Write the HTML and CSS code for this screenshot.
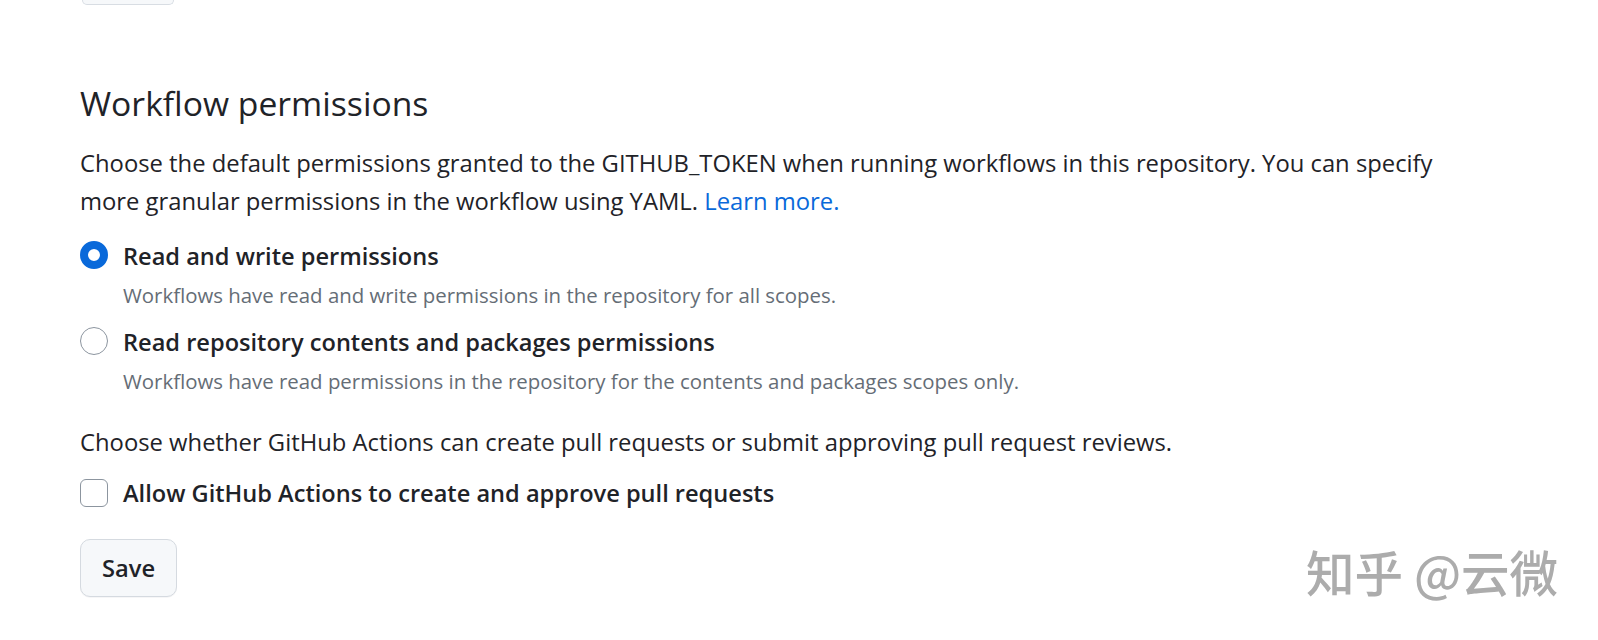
FILE: index.html
```html
<!DOCTYPE html>
<html lang="en">
<head>
<meta charset="utf-8">
<title>Workflow permissions</title>
<link rel="stylesheet" href="styles.css">
</head>
<body>
<main class="page">
  <div class="prev-button"></div>
  <section class="settings-section">
    <h2 class="section-title">Workflow permissions</h2>
    <p class="section-desc">Choose the default permissions granted to the GITHUB_TOKEN when running workflows in this repository. You can specify more granular permissions in the workflow using YAML. <a class="link" href="#">Learn more.</a></p>
    <div class="option-list">
      <label class="option">
        <input class="radio" type="radio" name="perm" checked>
        <span class="option-body">
          <span class="option-title">Read and write permissions</span>
          <span class="option-note">Workflows have read and write permissions in the repository for all scopes.</span>
        </span>
      </label>
      <label class="option">
        <input class="radio" type="radio" name="perm">
        <span class="option-body">
          <span class="option-title">Read repository contents and packages permissions</span>
          <span class="option-note">Workflows have read permissions in the repository for the contents and packages scopes only.</span>
        </span>
      </label>
    </div>
    <p class="section-desc section-desc-second">Choose whether GitHub Actions can create pull requests or submit approving pull request reviews.</p>
    <label class="check-option">
      <input class="checkbox" type="checkbox">
      <span class="option-title">Allow GitHub Actions to create and approve pull requests</span>
    </label>
    <button class="btn" type="button">Save</button>
  </section>
  <div class="watermark">知乎 @云微</div>
</main>
</body>
</html>
```

FILE: styles.css
```css
* { box-sizing: border-box; }

body {
  margin: 0;
  background: #ffffff;
  font-family: "Open Sans", "Noto Sans", sans-serif;
  color: #1f2328;
}

.page {
  position: relative;
  height: 640px;
  overflow: hidden;
  padding-left: 80px;
}

.prev-button {
  width: 92px;
  height: 5px;
  margin-left: 2px;
  background: #f6f8fa;
  border: 1.5px solid #d8dde3;
  border-top: 0;
  border-radius: 0 0 10px 10px;
}

.section-title {
  margin: 76px 0 0;
  font-size: 33.7px;
  line-height: 44px;
  font-weight: 400;
  color: #1f2328;
}

.section-desc {
  margin: 19px 0 0;
  max-width: 1385px;
  font-size: 23.8px;
  line-height: 38px;
}

.section-desc-second {
  margin-top: 27px;
}

.link {
  color: #0969da;
  text-decoration: none;
}

.option-list {
  display: flex;
  flex-direction: column;
  gap: 15px;
  margin-top: 19px;
}

.option {
  display: flex;
  align-items: flex-start;
  gap: 15px;
}

.option-body {
  display: flex;
  flex-direction: column;
}

.radio {
  appearance: none;
  flex: none;
  width: 28px;
  height: 28px;
  margin: 2px 0 0;
  border: 1.75px solid #8c959f;
  border-radius: 50%;
  background: #ffffff;
}

.radio:checked {
  border: 8.5px solid #0969da;
}

.option-title {
  display: block;
  font-size: 23.6px;
  line-height: 34px;
  font-weight: 600;
}

.option-note {
  display: block;
  margin-top: 7px;
  font-size: 20.4px;
  line-height: 30px;
  color: #656d76;
}

.check-option {
  display: flex;
  align-items: center;
  gap: 15px;
  margin-top: 15px;
}

.checkbox {
  appearance: none;
  flex: none;
  width: 28px;
  height: 28px;
  margin: 0;
  border: 1.75px solid #8c959f;
  border-radius: 6px;
  background: #ffffff;
}

.btn {
  display: block;
  height: 58px;
  margin-top: 29px;
  padding: 0 21px;
  font-family: inherit;
  font-size: 23.7px;
  font-weight: 600;
  color: #1f2328;
  background: #f6f8fa;
  border: 1.75px solid #d5dae0;
  border-radius: 10px;
  box-shadow: 0 1px 0 rgba(31, 35, 40, 0.04);
}

.watermark {
  position: absolute;
  left: 1306px;
  top: 547px;
  font-family: "Noto Sans CJK SC", sans-serif;
  font-size: 48.5px;
  line-height: 48px;
  font-weight: 500;
  color: #acacac;
  text-shadow: 1px 1px 0 #ffffff;
  white-space: nowrap;
}
```
